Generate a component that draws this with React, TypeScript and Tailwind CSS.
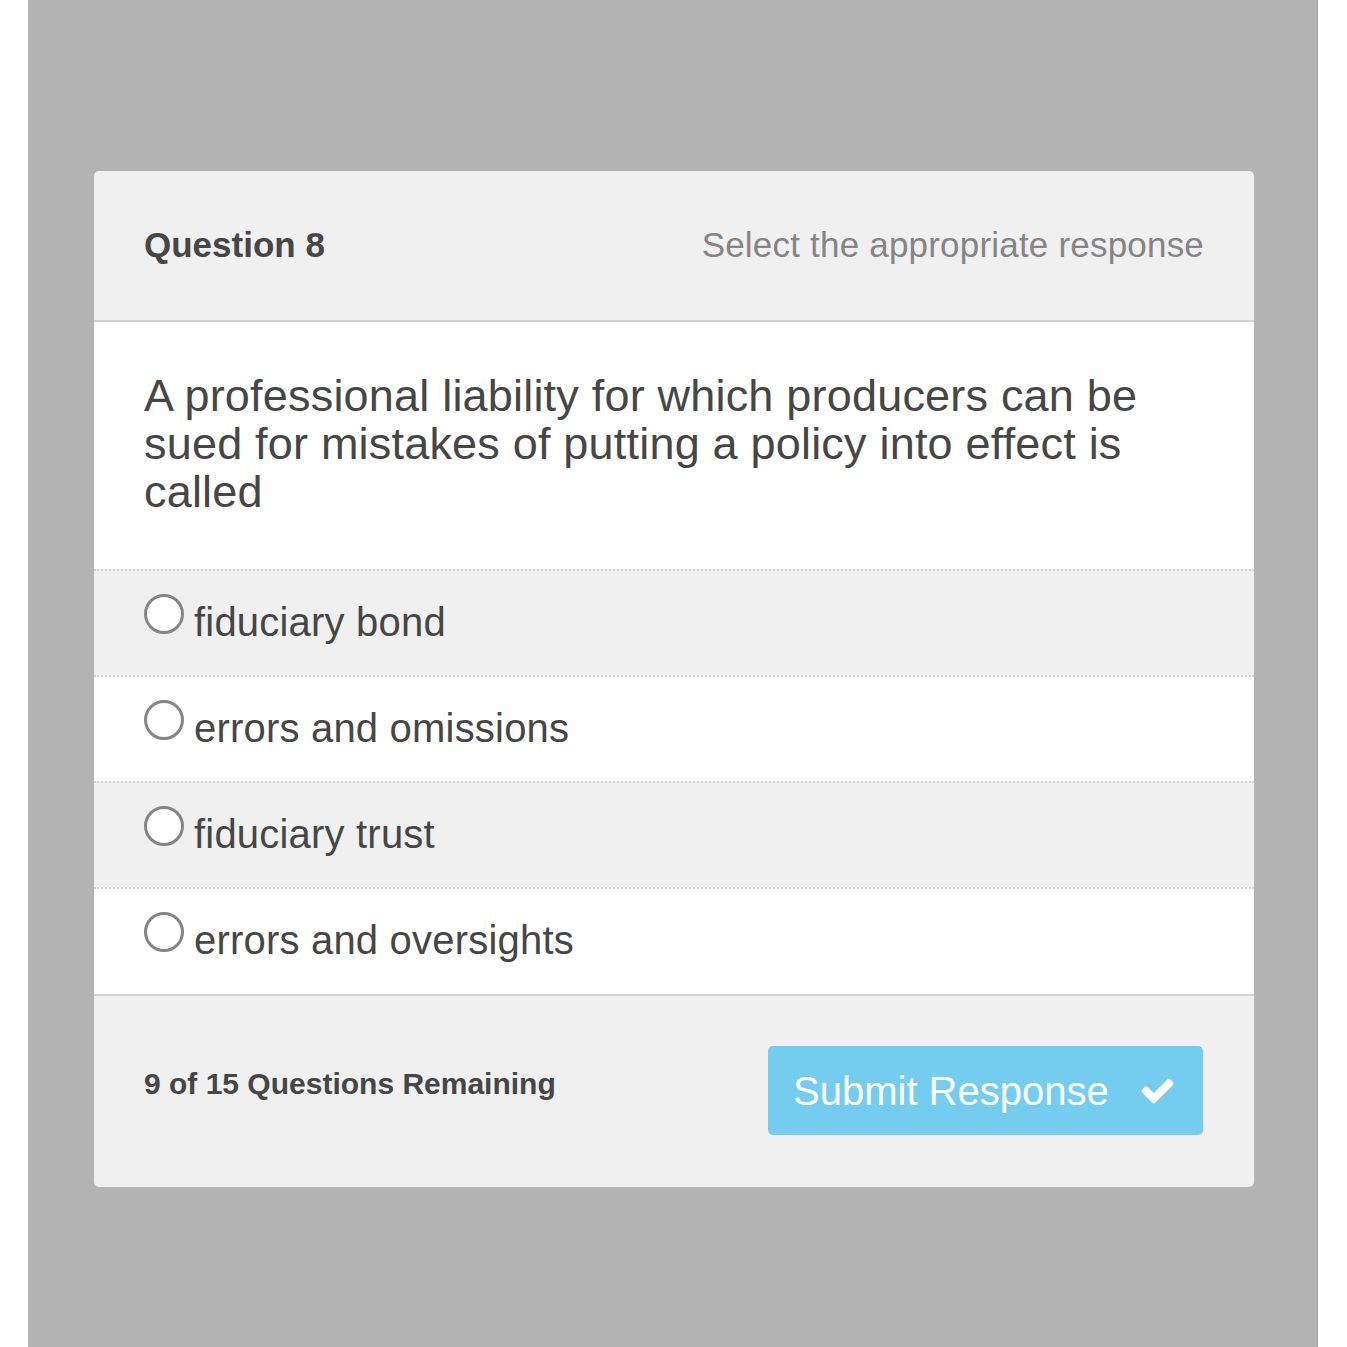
const OPTIONS = ['fiduciary bond', 'errors and omissions', 'fiduciary trust', 'errors and oversights'];

function CheckIcon() {
  return (
    <svg viewBox="0 0 1792 1792" className="w-[37px] h-[37px]" fill="currentColor">
      <path d="M1671 566q0 40-28 68l-724 724-136 136q-28 28-68 28t-68-28l-136-136-362-362q-28-28-28-68t28-68l136-136q28-28 68-28t68 28l294 295 656-657q28-28 68-28t68 28l136 136q28 28 28 68z" />
    </svg>
  );
}

export default function App() {
  return (
    <div className="bg-white min-h-[1347px] pl-[28px] pr-[29px]" style={{ fontFamily: '"Liberation Sans", Arial, sans-serif' }}>
      <div className="bg-[#b3b3b3] h-[1347px] pt-[171px] pl-[66px] pr-[63px] border-r border-[#a8a8a8]">
        <div className="rounded-[5px] overflow-hidden bg-[#f0f0f0] text-[#464646]">
          <div className="h-[151px] px-[50px] flex items-center justify-between border-b-2 border-[#d2d2d2]">
            <span className="text-[35px] font-bold">Question 8</span>
            <span className="text-[35px] text-[#858585] tracking-[0.2px]">Select the appropriate response</span>
          </div>
          <div className="bg-white px-[50px] pt-[50px] pb-[53px]">
            <p className="text-[45px] leading-[48px] tracking-[0.2px] pr-[40px]">
              A professional liability for which producers can be sued for mistakes of putting a policy into effect is called
            </p>
          </div>
          {OPTIONS.map((o, i) => (
            <label
              key={o}
              className={`flex items-start gap-[10px] px-[50px] pt-[23px] border-t-2 border-dotted border-[#d4d4d4] cursor-pointer ${i === 3 ? 'h-[107px]' : 'h-[106px]'} ${i % 2 === 0 ? 'bg-[#f0f0f0]' : 'bg-white'}`}
            >
              <span className="w-[40px] h-[40px] rounded-full border-[3px] border-[#858585] bg-white shrink-0" />
              <span className="text-[40px] leading-[46px] mt-[5px] tracking-[0.2px]">{o}</span>
            </label>
          ))}
          <div className="border-t-2 border-[#d2d2d2] h-[193px] pr-[51px] pl-[50px] pt-[50px] flex items-start justify-between">
            <span className="text-[30px] font-bold mt-[15px]">9 of 15 Questions Remaining</span>
            <button className="w-[435px] h-[89px] rounded-[5px] bg-[#74cdee] text-white flex items-center pl-[25px] gap-[30px]">
              <span className="text-[40px] leading-[46px]">Submit Response</span>
              <CheckIcon />
            </button>
          </div>
        </div>
      </div>
    </div>
  );
}
